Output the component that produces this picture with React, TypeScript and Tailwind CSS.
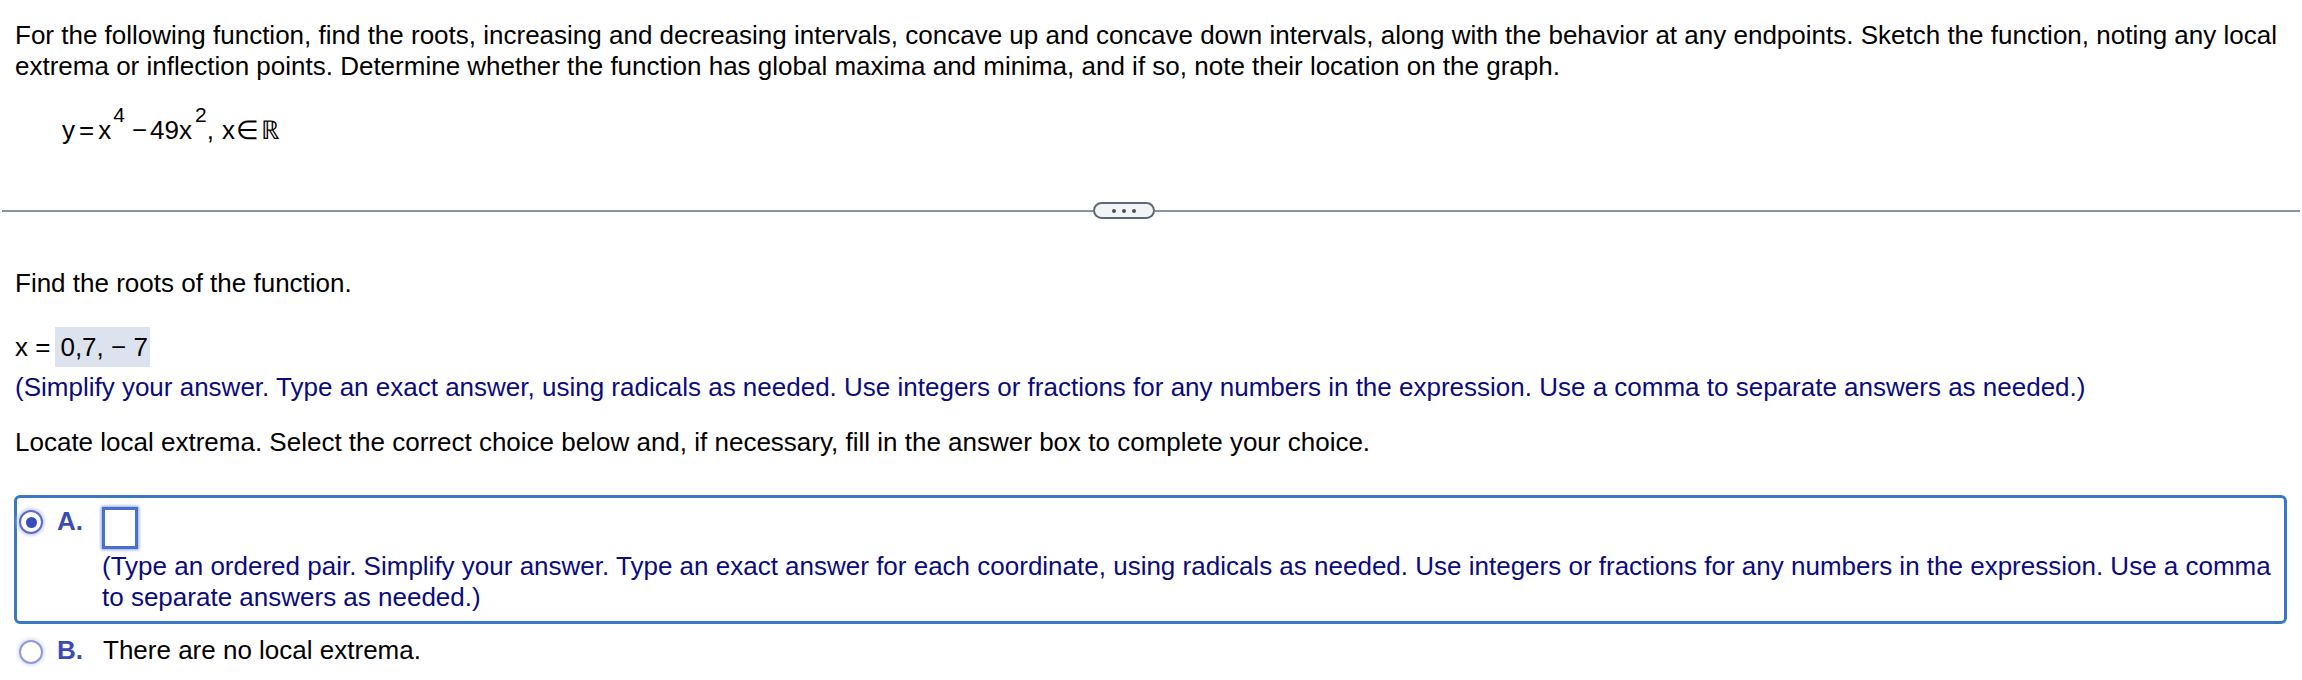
import React from "react";

const font = "font-['Liberation_Sans',Arial,sans-serif]";

function Divider() {
  return (
    <div className="mt-[56px] flex h-[17px] items-center">
      <div className="ml-[2px] h-[2px] w-[1091px] bg-[#8a939f]" />
      <div className="flex h-[17px] w-[62px] items-center justify-center gap-[6px] rounded-full border-2 border-[#5d6978] bg-[#f3f4f6]">
        <span className="h-[4px] w-[4px] rounded-full bg-[#4a5260]" />
        <span className="h-[4px] w-[4px] rounded-full bg-[#4a5260]" />
        <span className="h-[4px] w-[4px] rounded-full bg-[#4a5260]" />
      </div>
      <div className="mr-[2px] h-[2px] flex-1 bg-[#8a939f]" />
    </div>
  );
}

function Radio({ checked }: { checked?: boolean }) {
  return checked ? (
    <div className="flex h-[24px] w-[24px] shrink-0 items-center justify-center rounded-full border-2 border-[#5b6bc9] bg-white shadow-[0_0_3px_2px_#d3d8f3]">
      <div className="h-[11px] w-[11px] rounded-full bg-[#3a4bbb]" />
    </div>
  ) : (
    <div className="h-[24px] w-[24px] shrink-0 rounded-full border-2 border-[#8f9ade] bg-white shadow-[0_0_3px_2px_#e3e6f7]" />
  );
}

export default function App() {
  return (
    <div className={`${font} h-[680px] w-[2302px] overflow-hidden bg-white text-[26px] leading-[31px] text-black`}>
      <div className="pl-[15px] pr-[8px] pt-[20px]">
        For the following function, find the roots, increasing and decreasing intervals, concave up and concave down
        intervals, along with the behavior at any endpoints. Sketch the function, noting any local extrema or inflection
        points. Determine whether the function has global maxima and minima, and if so, note their location on the graph.
      </div>

      <div className="mt-[33px] flex h-[31px] items-start pl-[62px] whitespace-nowrap">
        <span>y</span>
        <span className="ml-[4px]">=</span>
        <span className="ml-[4px]">x</span>
        <span className="relative -top-[11px] ml-[2px] text-[21px] leading-[21px]">4</span>
        <span className="ml-[7px]">−</span>
        <span className="ml-[3px]">49x</span>
        <span className="relative -top-[11px] ml-[3px] text-[21px] leading-[21px]">2</span>
        <span>,</span>
        <span className="ml-[8px]">x</span>
        <span className="ml-[1px]">∈</span>
        <span className="ml-[2px]">ℝ</span>
      </div>

      <Divider />

      <div className="mt-[49px] pl-[15px]">Find the roots of the function.</div>

      <div className="mt-[28px] flex h-[40px] items-center pl-[15px] leading-[40px]">
        <span>x =</span>
        <span className="ml-[5px] h-[40px] w-[95px] bg-[#dce3ef] pl-[5px] whitespace-nowrap">0,7, − 7</span>
      </div>

      <div className="mt-[5px] pl-[15px] text-[#0b0b80]">
        (Simplify your answer. Type an exact answer, using radicals as needed. Use integers or fractions for any numbers
        in the expression. Use a comma to separate answers as needed.)
      </div>

      <div className="mt-[24px] pl-[15px]">
        Locate local extrema. Select the correct choice below and, if necessary, fill in the answer box to complete your
        choice.
      </div>

      <div className="ml-[14px] mt-[37px] flex h-[129px] w-[2273px] rounded-[6px] border-[3px] border-[#3a78c6]">
        <div className="ml-[2px] mt-[12px]">
          <Radio checked />
        </div>
        <div className="ml-[14px] mt-[8px] w-[26px] font-bold text-[#3b4cb4]">A.</div>
        <div className="ml-[19px] flex-1 pr-[10px] pt-[9px] text-[#0b0b80]">
          <div className="h-[42px] w-[36px] border-[3px] border-[#4a6dd0] bg-white shadow-[0_0_3px_1px_#8ea6e6]" />
          <div className="mt-[2px]">
            (Type an ordered pair. Simplify your answer. Type an exact answer for each coordinate, using radicals as
            needed. Use integers or fractions for any numbers in the expression. Use a comma to separate answers as
            needed.)
          </div>
        </div>
      </div>

      <div className="mt-[11px] flex pl-[19px]">
        <div className="mt-[5px]">
          <Radio />
        </div>
        <div className="ml-[14px] w-[26px] font-bold text-[#3b4cb4]">B.</div>
        <div className="ml-[20px]">There are no local extrema.</div>
      </div>
    </div>
  );
}
